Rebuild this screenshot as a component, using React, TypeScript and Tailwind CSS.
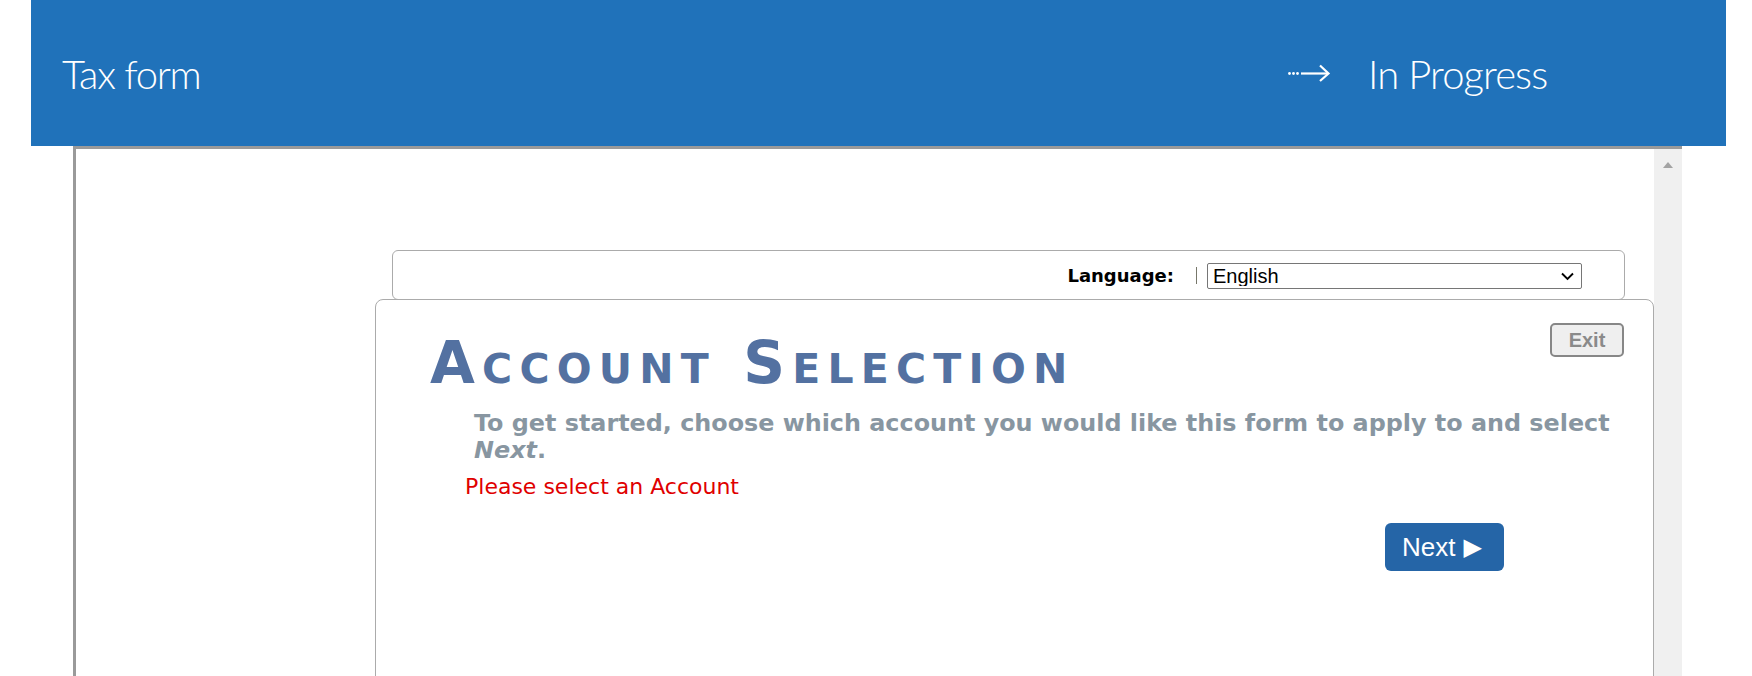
import React from "react";

export default function App() {
  return (
    <div className="w-[1752px] h-[676px] bg-white overflow-hidden">
      {/* Header */}
      <div className="ml-[31px] w-[1695px] h-[146px] bg-[#2072ba] flex items-center pl-[31px]">
        <div className="w-[1225px] shrink-0 text-white text-[40px] font-light leading-none tracking-[-1.3px] [font-family:Lato,'Open_Sans',sans-serif] pt-[2px]">
          Tax form
        </div>
        <svg width="44" height="18" viewBox="0 0 44 18" className="shrink-0">
          <circle cx="2.5" cy="9.5" r="1.4" fill="white" />
          <circle cx="6.5" cy="9.5" r="1.4" fill="white" />
          <circle cx="10.5" cy="9.5" r="1.4" fill="white" />
          <line x1="14" y1="9.5" x2="41" y2="9.5" stroke="white" strokeWidth="2.2" />
          <polyline points="33,1.5 41.5,9.5 33,17" fill="none" stroke="white" strokeWidth="2.2" />
        </svg>
        <div className="ml-[37px] text-white text-[40px] font-light leading-none tracking-[-0.9px] [font-family:Lato,'Open_Sans',sans-serif] pt-[2px]">
          In Progress
        </div>
      </div>

      {/* Frame */}
      <div className="ml-[73px] w-[1609px] h-[530px] border-l-[3px] border-t-[3px] border-[#9a9a9a] flex">
        <div className="flex-1 overflow-hidden">
          {/* Language bar */}
          <div className="mt-[101px] ml-[316px] w-[1233px] h-[50px] border border-[#ababab] rounded-[6px] flex items-center justify-end pr-[42px] pt-[1px]">
            <span className="text-[18px] font-bold text-black [font-family:'DejaVu_Sans',Verdana,sans-serif]">
              Language:
            </span>
            <span className="ml-[22px] w-[1px] h-[17px] bg-[#77776a]" />
            <div className="relative ml-[10px]">
              <select className="appearance-none w-[375px] h-[26px] border border-[#767676] rounded-[2px] bg-white pl-[5px] text-[20px] leading-none text-black [font-family:'Liberation_Sans',Arial,sans-serif]">
                <option>English</option>
              </select>
              <svg
                width="13"
                height="9"
                viewBox="0 0 13 9"
                className="absolute right-[8px] top-[9px] pointer-events-none"
              >
                <polyline points="1,1.5 6.5,7 12,1.5" fill="none" stroke="black" strokeWidth="1.9" />
              </svg>
            </div>
          </div>

          {/* Card */}
          <div className="-mt-[1px] ml-[299px] w-[1279px] h-[420px] border border-[#ababab] rounded-[8px] bg-white pt-[23px]">
            <div className="flex items-start justify-between">
              <h1 className="mt-[11px] ml-[54px] text-[58px] leading-none font-bold text-[#5371a1] tracking-[7.2px] [font-variant:small-caps] [font-family:'DejaVu_Sans',Verdana,sans-serif]">
                Account Selection
              </h1>
              <button className="mr-[29px] w-[74px] h-[34px] border-2 border-[#878787] rounded-[5px] bg-[#efefef] text-[20px] font-bold text-[#8a8a8a] leading-none [font-family:'Liberation_Sans',Arial,sans-serif]">
                Exit
              </button>
            </div>
            <p className="mt-[18px] ml-[98px] whitespace-nowrap text-[23.85px] leading-[27px] font-bold text-[#8896a1] [font-family:'DejaVu_Sans',Verdana,sans-serif]">
              To get started, choose which account you would like this form to apply to and select
              <br />
              <em>Next</em>.
            </p>
            <p className="mt-[10px] ml-[89px] text-[22px] leading-[26px] text-[#e00000] [font-family:'DejaVu_Sans',Verdana,sans-serif]">
              Please select an Account
            </p>
            <div className="mt-[23px] flex justify-end pr-[149px]">
              <button className="w-[119px] h-[48px] rounded-[6px] bg-[#2565a7] text-white text-[26px] leading-none flex items-center pl-[17px] [font-family:'Liberation_Sans',Arial,sans-serif]">
                Next<span className="ml-[8px] text-[24px] [font-family:'DejaVu_Sans',sans-serif]">▶</span>
              </button>
            </div>
          </div>
        </div>

        {/* Scrollbar */}
        <div className="w-[28px] h-full bg-[#f0f0f0] flex justify-center pt-[13px]">
          <svg width="10" height="6" viewBox="0 0 10 6">
            <polygon points="0,6 5,0 10,6" fill="#a3a3a3" />
          </svg>
        </div>
      </div>
    </div>
  );
}
